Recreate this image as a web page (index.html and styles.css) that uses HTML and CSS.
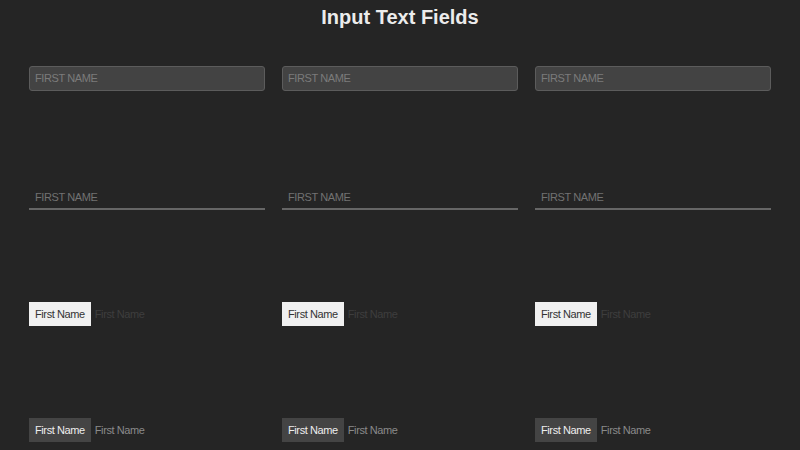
FILE: index.html
```html
<!DOCTYPE html>
<html lang="en">
    <head>
        <meta charset="UTF-8">
        <title>Input Text Fields</title>
        <link rel="stylesheet" href="styles.css">
    </head>
    <body>
        <h1 class="title">Input Text Fields</h1>
        <div class="fields">
            <!-- 1: boxed -->
            <input class="box" type="text" placeholder="FIRST NAME">
            <input class="box" type="text" placeholder="FIRST NAME">
            <input class="box" type="text" placeholder="FIRST NAME">

            <!-- 2: underline -->
            <input class="line" type="text" placeholder="FIRST NAME">
            <input class="line" type="text" placeholder="FIRST NAME">
            <input class="line" type="text" placeholder="FIRST NAME">

            <!-- 3: light label -->
            <div class="group light">
                <label>First Name</label>
                <input type="text" placeholder="First Name">
            </div>
            <div class="group light">
                <label>First Name</label>
                <input type="text" placeholder="First Name">
            </div>
            <div class="group light">
                <label>First Name</label>
                <input type="text" placeholder="First Name">
            </div>

            <!-- 4: dark label -->
            <div class="group dark">
                <label>First Name</label>
                <input type="text" placeholder="First Name">
            </div>
            <div class="group dark">
                <label>First Name</label>
                <input type="text" placeholder="First Name">
            </div>
            <div class="group dark">
                <label>First Name</label>
                <input type="text" placeholder="First Name">
            </div>
        </div>
    </body>
</html>
```

FILE: styles.css
```css
body {
    margin: 0;
    background: #252525;
    font-family: "Liberation Sans", Arial, sans-serif;
}

.title {
    margin: 6px 0 0;
    font-size: 20px;
    line-height: 23px;
    font-weight: bold;
    color: #ececec;
    text-align: center;
}

.fields {
    display: grid;
    grid-template-columns: repeat(3, 1fr);
    column-gap: 17px;
    row-gap: 92px;
    margin: 37px 29px 0;
}

input {
    font-family: "Liberation Sans", Arial, sans-serif;
    font-size: 11px;
    letter-spacing: -0.4px;
    outline: none;
    box-sizing: border-box;
    margin: 0;
}

.box {
    width: 100%;
    height: 25px;
    padding: 0 5px 1px;
    background: #434343;
    border: 1px solid #5c5c5c;
    border-radius: 3px;
    color: #ccc;
}

.box::placeholder {
    color: #7b7b7b;
}

.line {
    width: 100%;
    height: 26px;
    margin-top: 1px;
    padding: 2px 6px 0;
    background: transparent;
    border: 0;
    border-bottom: 2px solid #666;
    color: #ccc;
}

.line::placeholder {
    color: #727272;
}

.group {
    display: flex;
    height: 24px;
}

.group label {
    display: flex;
    align-items: center;
    padding: 0 6px;
    font-size: 11px;
    letter-spacing: -0.4px;
    white-space: nowrap;
}

.group input {
    flex: 1;
    min-width: 0;
    padding: 0 4px;
    background: transparent;
    border: 0;
}

.light label {
    background: #f0f0f0;
    color: #333;
}

.light input::placeholder {
    color: #3e3e3e;
}

.dark label {
    background: #444;
    color: #eee;
}

.dark input::placeholder {
    color: #8a8a8a;
}
```
